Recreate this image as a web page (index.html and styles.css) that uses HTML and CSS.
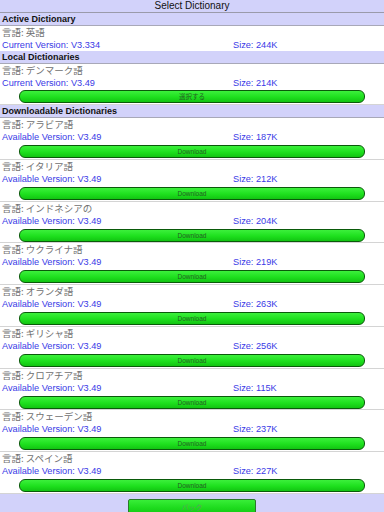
FILE: index.html
```html
<!DOCTYPE html>
<html lang="ja">
<head>
  <meta charset="UTF-8">
  <title>Select Dictionary</title>
  <link rel="stylesheet" href="styles.css">
</head>
<body>

  <div class="title">Select Dictionary</div>

  <div class="section">Active Dictionary</div>
  <div class="entry active">
    <div class="lang">言語: 英語</div>
    <div class="ver"><span>Current Version: V3.334</span><span>Size: 244K</span></div>
  </div>

  <div class="section">Local Dictionaries</div>
  <div class="entry local">
    <div class="lang">言語: デンマーク語</div>
    <div class="ver"><span>Current Version: V3.49</span><span>Size: 214K</span></div>
    <button type="button" class="btn">選択する</button>
  </div>

  <div class="section">Downloadable Dictionaries</div>
  <div id="downloads"></div>

  <div class="bottom">
    <button type="button" class="back">バック</button>
  </div>

  <script>
    const dicts = [
      { lang: "アラビア語", size: "187K" },
      { lang: "イタリア語", size: "212K" },
      { lang: "インドネシアの", size: "204K" },
      { lang: "ウクライナ語", size: "219K" },
      { lang: "オランダ語", size: "263K" },
      { lang: "ギリシャ語", size: "256K" },
      { lang: "クロアチア語", size: "115K" },
      { lang: "スウェーデン語", size: "237K" },
      { lang: "スペイン語", size: "227K" }
    ];

    const list = document.getElementById("downloads");
    dicts.forEach(d => {
      const div = document.createElement("div");
      div.className = "entry";
      div.innerHTML = `<div class="lang">言語: ${d.lang}</div>` +
        `<div class="ver"><span>Available Version: V3.49</span><span>Size: ${d.size}</span></div>` +
        `<button type="button" class="btn">Download</button>`;
      list.appendChild(div);
    });
  </script>

</body>
</html>
```

FILE: styles.css
```css
body {
  margin: 0;
  font-family: "Liberation Sans", "Noto Sans CJK JP", sans-serif;
  background-color: #ffffff;
  overflow: hidden;
}
.title {
  height: 12px;
  line-height: 12px;
  font-size: 10px;
  text-align: center;
  color: #111;
  background-color: #d2d2fa;
  border-bottom: 1px solid #9a9aaa;
}
.section {
  height: 12px;
  line-height: 12px;
  padding-left: 2px;
  font-size: 9px;
  font-weight: bold;
  color: #111;
  background-color: #d2d2fa;
  border-bottom: 1px solid #a8a8b8;
}
.entry {
  height: 40.75px;
  border-bottom: 1px solid #d4d4d4;
}
.entry.active {
  height: 25px;
  border-bottom: none;
}
.entry.local {
  height: 40px;
}
.lang {
  height: 13px;
  line-height: 13px;
  padding-left: 2px;
  font-family: "Noto Sans CJK JP", sans-serif;
  font-size: 9.5px;
  color: #707070;
}
.ver {
  display: grid;
  grid-template-columns: 231px auto;
  height: 13px;
  line-height: 12px;
  padding-left: 2px;
  font-size: 9.2px;
  color: #3a3ae6;
}
.active .ver {
  height: 12px;
}
.btn {
  display: block;
  width: 346px;
  height: 13px;
  margin: 1px 19px 0;
  padding: 0;
  font-family: "Liberation Sans", "Noto Sans CJK JP", sans-serif;
  font-size: 6.5px;
  line-height: 11px;
  color: #245e24;
  background: linear-gradient(#3cf03c, #1ee01e 55%, #12c412);
  border: 1px solid #0a5a0a;
  border-radius: 6px;
}
.local .btn {
  margin-top: 0;
}
.bottom {
  height: 18px;
  padding-top: 2px;
  box-sizing: border-box;
  background-color: #d2d2fa;
  text-align: center;
}
.back {
  width: 128px;
  height: 16px;
  padding: 0;
  font-family: "Noto Sans CJK JP", sans-serif;
  font-size: 7px;
  color: #5e9e5e;
  background: linear-gradient(#38ee38, #1edc1e 55%, #14c814);
  border: 1px solid #2a7a2a;
  border-radius: 2px;
}
```
